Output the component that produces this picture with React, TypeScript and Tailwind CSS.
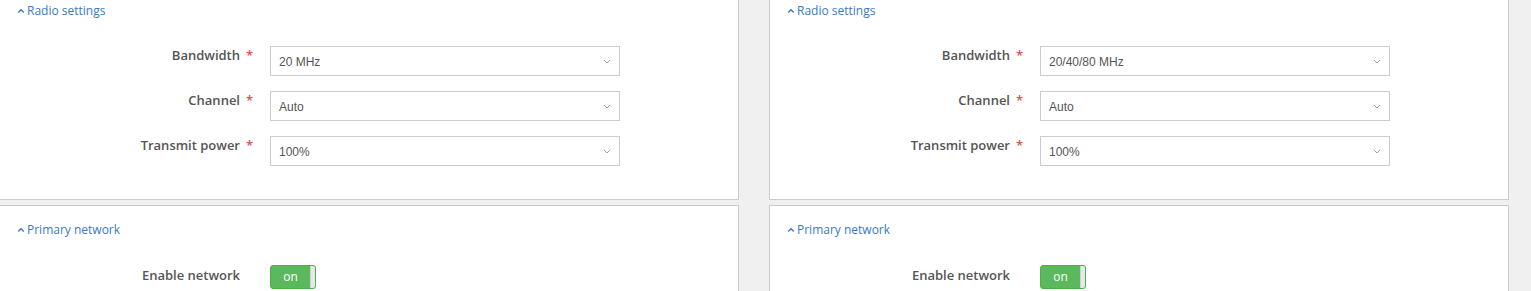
import React from "react";

const Caret = () => (
  <svg width="8" height="6" viewBox="0 0 8 6" className="mr-[2px] mt-[1px]">
    <polyline points="1.2,4.6 4,1.8 6.8,4.6" fill="none" stroke="#3b79c2" strokeWidth="1.4" />
  </svg>
);

const Chevron = () => (
  <svg width="8" height="5" viewBox="0 0 8 5">
    <polyline points="1,1 4,4 7,1" fill="none" stroke="#a0a0a0" strokeWidth="1" />
  </svg>
);

function Header({ title }: { title: string }) {
  return (
    <div className="flex items-center pl-[17px] h-[17px] text-[12px] leading-[17px] text-[#3b79c2]" style={{ fontFamily: '"Open Sans", sans-serif' }}>
      <Caret />
      <span>{title}</span>
    </div>
  );
}

function SelectRow({ label, value }: { label: string; value: string }) {
  return (
    <div className="flex items-start h-[30px]">
      <div
        className="w-[240px] text-right text-[13px] leading-[18px] font-semibold text-[#555555]"
        style={{ fontFamily: '"Open Sans", sans-serif' }}
      >
        {label}
      </div>
      <div
        className="w-[30px] pl-[6px] text-[13px] leading-[18px] font-semibold text-[#d9534f]"
        style={{ fontFamily: '"Open Sans", sans-serif' }}
      >
        *
      </div>
      <div className="w-[350px] h-[30px] border border-[#cccccc] bg-white flex items-center justify-between pl-[8px] pr-[8px]">
        <span className="text-[12px] text-[#555555] mt-[1px]" style={{ fontFamily: '"Liberation Sans", Arial, sans-serif' }}>
          {value}
        </span>
        <Chevron />
      </div>
    </div>
  );
}

function Column({ bandwidth }: { bandwidth: string }) {
  return (
    <div className="w-[740px] flex flex-col gap-[5px]">
      <div className="h-[214px] border border-[#cccccc] bg-white pt-[15px]">
        <Header title="Radio settings" />
        <div className="mt-[27px] flex flex-col gap-[15px]">
          <SelectRow label="Bandwidth" value={bandwidth} />
          <SelectRow label="Channel" value="Auto" />
          <SelectRow label="Transmit power" value="100%" />
        </div>
      </div>
      <div className="h-[200px] border border-[#cccccc] bg-white pt-[15px]">
        <Header title="Primary network" />
        <div className="mt-[27px] flex items-start">
          <div
            className="w-[240px] text-right text-[13px] leading-[18px] font-semibold text-[#555555] mt-[1px]"
            style={{ fontFamily: '"Open Sans", sans-serif' }}
          >
            Enable network
          </div>
          <div className="w-[30px]" />
          <div className="w-[46px] h-[24px] rounded-[3px] border border-[#4cae4c] bg-[#5cb85c] flex overflow-hidden">
            <div className="flex-1 flex items-center justify-center text-white text-[12px]" style={{ fontFamily: '"Open Sans", sans-serif' }}>
              on
            </div>
            <div className="w-[5px] bg-[#e8e8e8] border-l border-[#cfcfcf]" />
          </div>
        </div>
      </div>
    </div>
  );
}

export default function App() {
  return (
    <div className="w-[1531px] h-[291px] bg-[#f0f0f0] overflow-hidden">
      <div className="flex gap-[30px] -mt-[14px] -ml-px">
        <Column bandwidth="20 MHz" />
        <Column bandwidth="20/40/80 MHz" />
      </div>
    </div>
  );
}
